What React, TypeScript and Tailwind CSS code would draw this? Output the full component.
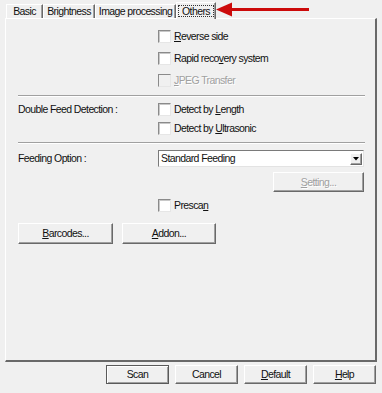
import React from "react";

const raised =
  "border border-t-white border-l-white border-r-[#696969] border-b-[#696969] shadow-[inset_-1px_-1px_0_#a0a0a0] bg-[#f0f0f0]";

function U({ children }: { children: React.ReactNode }) {
  return <span className="underline underline-offset-[1px]">{children}</span>;
}

function Box({ disabled }: { disabled?: boolean }) {
  return (
    <div
      className={`w-[13px] h-[13px] shrink-0 border border-t-[#8a8a8a] border-l-[#8a8a8a] border-r-[#e6e6e6] border-b-[#e6e6e6] ${
        disabled ? "bg-[#f0f0f0]" : "bg-white shadow-[inset_1px_1px_0_#c8c8c8]"
      }`}
    />
  );
}

function Check({
  children,
  disabled,
}: {
  children: React.ReactNode;
  disabled?: boolean;
}) {
  return (
    <div className="flex items-center">
      <Box disabled={disabled} />
      <span
        className={`ml-[3px] ${
          disabled ? "text-[#a0a0a0] [text-shadow:1px_1px_0_#ffffff]" : ""
        }`}
      >
        {children}
      </span>
    </div>
  );
}

function Sep() {
  return <div className="h-[2px] border-t border-t-[#a0a0a0] border-b border-b-white" />;
}

function Tab({
  children,
  w,
  selected,
}: {
  children: React.ReactNode;
  w: string;
  selected?: boolean;
}) {
  if (selected) {
    return (
      <div
        className={`${w} h-[17px] -mb-[1px] relative z-10 flex items-center justify-center bg-[#f0f0f0] border-t border-l border-t-white border-l-white border-r border-r-[#696969] shadow-[inset_-1px_0_0_#a0a0a0]`}
      >
        <span className="border border-dotted border-[#333] px-[3px] leading-[10px] h-[12px] flex items-center">
          {children}
        </span>
      </div>
    );
  }
  return (
    <div
      className={`${w} h-[14px] flex items-center justify-center border-t border-l border-t-white border-l-white border-r border-r-[#696969] shadow-[inset_-1px_0_0_#a0a0a0]`}
    >
      {children}
    </div>
  );
}

export default function App() {
  return (
    <div className="w-[382px] h-[393px] bg-[#f0f0f0] relative overflow-hidden text-[#111] text-[10.5px] tracking-[-0.6px] font-['Liberation_Sans',Arial,sans-serif] leading-none select-none">
      {/* tabs */}
      <div className="flex items-end h-[18px] pl-[6px]">
        <Tab w="w-[37px]">Basic</Tab>
        <Tab w="w-[52px]">Brightness</Tab>
        <Tab w="w-[81px]">Image processing</Tab>
        <Tab w="w-[40px]" selected>
          Others
        </Tab>
      </div>

      {/* panel */}
      <div className="ml-[5px] w-[372px] h-[344px] border-t border-l border-t-white border-l-white border-r-2 border-b-2 border-r-[#696969] border-b-[#696969] pl-[12px] pr-[10px] pt-[6px] flex flex-col">
        <div className="flex items-center h-[22px]">
          <div className="w-[140px]" />
          <Check>
            <U>R</U>everse side
          </Check>
        </div>
        <div className="flex items-center h-[22px]">
          <div className="w-[140px]" />
          <Check>
            Rapid reco<U>v</U>ery system
          </Check>
        </div>
        <div className="flex items-center h-[22px]">
          <div className="w-[140px]" />
          <Check disabled>
            <U>J</U>PEG Transfer
          </Check>
        </div>
        <div className="mt-[4px]">
          <Sep />
        </div>
        <div className="flex items-center h-[20px] mt-[2px]">
          <div className="w-[140px]">Double Feed Detection :</div>
          <Check>
            Detect by <U>L</U>ength
          </Check>
        </div>
        <div className="flex items-center h-[19px]">
          <div className="w-[140px]" />
          <Check>
            Detect by <U>U</U>ltrasonic
          </Check>
        </div>
        <div className="mt-[4px]">
          <Sep />
        </div>
        <div className="flex items-center h-[17px] mt-[6px]">
          <div className="w-[140px]">Feeding Option :</div>
          <div className="flex-1 h-[17px] mr-[1px] bg-white border border-t-[#7a7a7a] border-l-[#7a7a7a] border-r-[#e3e3e3] border-b-[#e3e3e3] flex items-center pl-[2px] pr-[1px]">
            <span className="flex-1">Standard Feeding</span>
            <div className={`w-[12px] h-[12px] ${raised} flex items-center justify-center`}>
              <svg width="6" height="4" viewBox="0 0 6 4">
                <polygon points="0,0 6,0 3,3.5" fill="#000" />
              </svg>
            </div>
          </div>
        </div>
        <div className="flex justify-end mt-[5px] mr-[1px]">
          <div
            className={`w-[91px] h-[20px] ${raised} flex items-center justify-center text-[#a0a0a0] [text-shadow:1px_1px_0_#ffffff]`}
          >
            <U>S</U>etting...
          </div>
        </div>
        <div className="flex items-center h-[21px] mt-[3px]">
          <div className="w-[140px]" />
          <Check>
            Presca<U>n</U>
          </Check>
        </div>
        <div className="flex mt-[7px]">
          <div className={`w-[95px] h-[21px] ${raised} flex items-center justify-center`}>
            <U>B</U>arcodes...
          </div>
          <div className={`ml-[9px] w-[94px] h-[21px] ${raised} flex items-center justify-center`}>
            <U>A</U>ddon...
          </div>
        </div>
      </div>

      {/* bottom buttons */}
      <div className="flex justify-end gap-[6px] pr-[6px] mt-[3px]">
        <div className="w-[63px] h-[19px] border border-[#5a5a5a] shadow-[inset_1px_1px_0_#ffffff,inset_-1px_-1px_0_#a0a0a0] bg-[#f0f0f0] flex items-center justify-center">
          Scan
        </div>
        <div className={`w-[63px] h-[19px] ${raised} flex items-center justify-center`}>
          Cancel
        </div>
        <div className={`w-[63px] h-[19px] ${raised} flex items-center justify-center`}>
          <U>D</U>efault
        </div>
        <div className={`w-[63px] h-[19px] ${raised} flex items-center justify-center`}>
          <U>H</U>elp
        </div>
      </div>

      {/* annotation arrow */}
      <svg
        className="absolute left-[216px] top-[1px]"
        width="96"
        height="16"
        viewBox="0 0 96 16"
      >
        <line x1="12" y1="8.5" x2="93" y2="8.5" stroke="#cc0a0a" strokeWidth="3" />
        <polygon points="0,8.5 16,1.5 16,15.5" fill="#cc0a0a" />
      </svg>
    </div>
  );
}
